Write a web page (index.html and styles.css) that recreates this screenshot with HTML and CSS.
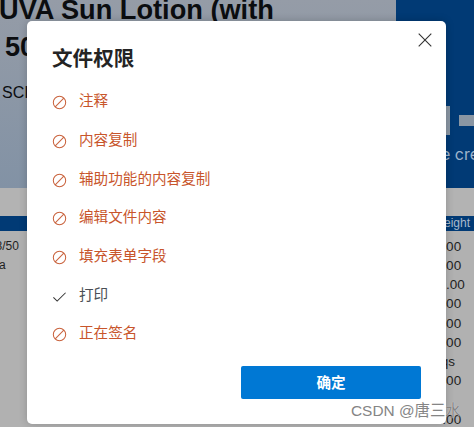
FILE: index.html
```html
<!DOCTYPE html>
<html lang="zh">
<head>
<meta charset="utf-8">
<title>文件权限</title>
<link rel="stylesheet" href="styles.css">
</head>
<body>
<div class="page">
  <header class="hero">
    <div class="hero-main">
      <h1 class="hero-title">UVA Sun Lotion (with<br><span class="hero-indent">50</span></h1>
      <p class="hero-sub">SCI</p>
    </div>
    <div class="hero-side">
      <div class="side-marks"><span class="mark-tall"></span><span class="mark-short"></span></div>
      <p class="side-text">e cre</p>
    </div>
  </header>
  <div class="band"></div>
  <div class="table">
    <div class="table-head"><span class="head-cell">Weight</span></div>
    <div class="table-body">
      <div class="table-row"><span class="cell-left cell-clip">8/50</span><span class="cell-right">1.00</span></div>
      <div class="table-row"><span class="cell-left">a</span><span class="cell-right">1.00</span></div>
      <div class="table-row"><span></span><span class="cell-right">10.00</span></div>
      <div class="table-row"><span></span><span class="cell-right">1.00</span></div>
      <div class="table-row"><span></span><span class="cell-right">1.00</span></div>
      <div class="table-row"><span></span><span class="cell-right">1.00</span></div>
      <div class="table-row"><span></span><span class="cell-right">qs</span></div>
      <div class="table-row"><span></span><span class="cell-right">1.00</span></div>
      <div class="table-row"><span></span><span class="cell-right"></span></div>
      <div class="table-row"><span></span><span class="cell-right">1.00</span></div>
    </div>
  </div>
</div>

<section class="modal">
  <svg class="close" viewBox="0 0 14 14" width="14" height="14"><path d="M.7.7l12.6 12.6M13.3.7L.7 13.3"/></svg>
  <h2 class="modal-title">文件权限</h2>
  <ul class="perms">
    <li class="perm denied"><svg class="icon" viewBox="0 0 16 16"><circle cx="8" cy="8" r="6.6"/><path d="M3.4 12.6l9.2-9.2"/></svg><span>注释</span></li>
    <li class="perm denied"><svg class="icon" viewBox="0 0 16 16"><circle cx="8" cy="8" r="6.6"/><path d="M3.4 12.6l9.2-9.2"/></svg><span>内容复制</span></li>
    <li class="perm denied"><svg class="icon" viewBox="0 0 16 16"><circle cx="8" cy="8" r="6.6"/><path d="M3.4 12.6l9.2-9.2"/></svg><span>辅助功能的内容复制</span></li>
    <li class="perm denied"><svg class="icon" viewBox="0 0 16 16"><circle cx="8" cy="8" r="6.6"/><path d="M3.4 12.6l9.2-9.2"/></svg><span>编辑文件内容</span></li>
    <li class="perm denied"><svg class="icon" viewBox="0 0 16 16"><circle cx="8" cy="8" r="6.6"/><path d="M3.4 12.6l9.2-9.2"/></svg><span>填充表单字段</span></li>
    <li class="perm allowed"><svg class="icon" viewBox="0 0 16 16"><path d="M1.5 9l4 3.8L14.5 4"/></svg><span>打印</span></li>
    <li class="perm denied"><svg class="icon" viewBox="0 0 16 16"><circle cx="8" cy="8" r="6.6"/><path d="M3.4 12.6l9.2-9.2"/></svg><span>正在签名</span></li>
  </ul>
  <div class="actions"><button class="ok">确定</button></div>
</section>
<div class="watermark">CSDN @唐三水</div>
</body>
</html>
```
FILE: styles.css
```css
html, body { margin: 0; padding: 0; }
body {
  width: 474px; height: 427px; overflow: hidden; position: relative;
  font-family: "Liberation Sans", "Noto Sans CJK SC", sans-serif;
  background: #b1b1b1;
}
.page { width: 474px; }
.hero { display: flex; height: 188px; background: linear-gradient(#959ca7, #8292a5); }
.hero-main { width: 396px; overflow: hidden; }
.hero-title {
  margin: -9px 0 0 -1px; font-size: 27.2px; line-height: 37px; font-weight: 700; color: #0b0d10; white-space: nowrap;
}
.hero-indent { margin-left: 6px; }
.hero-sub { margin: 19px 0 0 2px; font-size: 16px; line-height: 18px; font-weight: 400; color: #0b0d10; }
.hero-side { width: 78px; background: #013a75; padding-top: 106px; box-sizing: border-box; overflow: hidden; }
.side-marks { display: flex; align-items: center; gap: 9px; margin-left: 50px; height: 29px; }
.mark-tall { width: 8px; height: 29px; background: #8a96a3; }
.mark-short { width: 15px; height: 11px; background: #8a96a3; flex: none; }
.side-text { margin: 9px 0 0 45px; font-family: "Inter", sans-serif; font-size: 16px; line-height: 20px; color: #9fb4cc; white-space: nowrap; }
.band { height: 28px; background: #b3b3b3; }
.table-head {
  height: 15px; background: #013a75; color: #a9b9cc; font-size: 12px; line-height: 15px; display: flex; justify-content: flex-end;
}
.head-cell { margin-right: 4px; }
.table-body { padding-top: 5.5px; }
.table-row {
  display: flex; justify-content: space-between; height: 19.25px; font-size: 13.5px; line-height: 19px; color: #1f1f1f;
}
.cell-left { margin-left: -1px; font-size: 12px; }
.cell-clip { margin-left: -4.5px; }
.cell-right { width: 60px; text-align: center; margin-right: -4px; }
.modal {
  position: absolute; left: 27px; top: 21px; width: 419px; height: 403px; box-sizing: border-box;
  background: #fff; border-radius: 5px; padding: 23.5px 25px 0;
  box-shadow: 0 0 8px rgba(0, 0, 0, .2);
}
.close { position: absolute; left: 391px; top: 12px; }
.close path { fill: none; stroke: #333; stroke-width: 1.1; }
.modal-title { margin: 0; font-size: 20.6px; line-height: 27px; font-weight: 700; color: #242424; }
.perms { list-style: none; margin: 9.1px 0 0; padding: 0; }
.perm { display: flex; align-items: center; gap: 12px; height: 38.67px; font-size: 14.6px; }
.denied { color: #c8552b; }
.allowed { color: #4a4f55; }
.icon { width: 15px; height: 15px; flex: none; position: relative; top: 3px; }
.icon circle, .icon path { fill: none; stroke-width: 1.1; }
.denied .icon circle, .denied .icon path { stroke: #c9623c; }
.allowed .icon path { stroke: #333; }
.actions { display: flex; justify-content: flex-end; margin-top: 14.5px; }
.ok {
  width: 180px; height: 33.5px; border: 0; border-radius: 2px; background: #0078d4; color: #fff; padding: 0 0 2px;
  font: 700 14.6px "Liberation Sans", "Noto Sans CJK SC", sans-serif;
}
.watermark {
  position: absolute; left: 351px; top: 402px; font-size: 15.4px; line-height: 18px; color: #858585; white-space: nowrap;
  text-shadow: 0 0 1px rgba(255, 255, 255, .7);
}
```
